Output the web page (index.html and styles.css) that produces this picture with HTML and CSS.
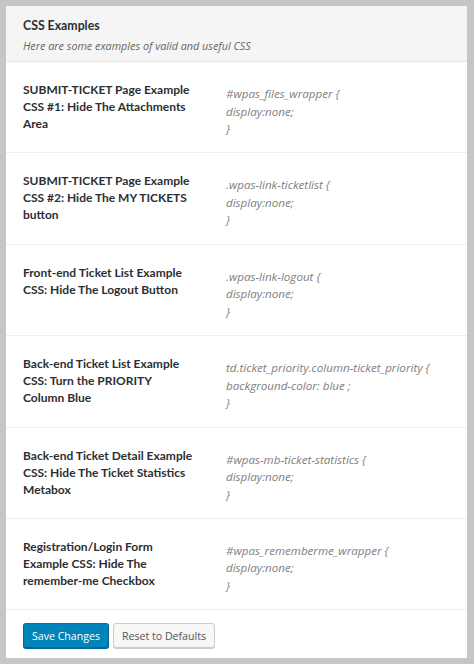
FILE: index.html
```html
<!DOCTYPE html>
<html lang="en">
<head>
    <meta charset="UTF-8">
    <meta name="viewport" content="width=device-width, initial-scale=1.0">
    <title>CSS Examples</title>
    <link rel="stylesheet" href="styles.css">
</head>
<body>

<div class="panel">
    <div class="panel-head">
        <h3>CSS Examples</h3>
        <p>Here are some examples of valid and useful CSS</p>
    </div>

    <div class="example">
        <div class="label">SUBMIT-TICKET Page Example CSS #1: Hide The Attachments Area</div>
        <div class="code">#wpas_files_wrapper {<br>display:none;<br>}</div>
    </div>
    <div class="example">
        <div class="label">SUBMIT-TICKET Page Example CSS #2: Hide The MY TICKETS button</div>
        <div class="code">.wpas-link-ticketlist {<br>display:none;<br>}</div>
    </div>
    <div class="example">
        <div class="label">Front-end Ticket List Example CSS: Hide The Logout Button</div>
        <div class="code">.wpas-link-logout {<br>display:none;<br>}</div>
    </div>
    <div class="example">
        <div class="label">Back-end Ticket List Example CSS: Turn the PRIORITY Column Blue</div>
        <div class="code">td.ticket_priority.column-ticket_priority {<br>background-color: blue ;<br>}</div>
    </div>
    <div class="example">
        <div class="label">Back-end Ticket Detail Example CSS: Hide The Ticket Statistics Metabox</div>
        <div class="code">#wpas-mb-ticket-statistics {<br>display:none;<br>}</div>
    </div>
    <div class="example">
        <div class="label">Registration/Login Form Example CSS: Hide The remember-me Checkbox</div>
        <div class="code">#wpas_rememberme_wrapper {<br>display:none;<br>}</div>
    </div>

    <div class="actions">
        <button class="btn btn-primary">Save Changes</button>
        <button class="btn">Reset to Defaults</button>
    </div>
</div>

</body>
</html>
```

FILE: styles.css
```css
body {
    margin: 0;
    padding: 6px 7px 7px 6px;
    background: #c6c6c6;
    font-family: "Open Sans", "Noto Sans", sans-serif;
    color: #2b2f33;
}

.panel {
    background: #fff;
}

.panel-head {
    background: #f5f5f5;
    border-bottom: 1px solid #e8e8e8;
    padding: 11px 17px 9px;
    height: 35px;
}

.panel-head h3 {
    margin: 0;
    font-family: Lato, "Open Sans", sans-serif;
    font-size: 12.3px;
    font-weight: 700;
    line-height: 17px;
}

.panel-head p {
    margin: 4px 0 0;
    font-size: 10.8px;
    font-style: italic;
    color: #666;
    line-height: 16px;
}

.example {
    display: grid;
    grid-template-columns: 203px 1fr;
    height: 90.4px;
    padding: 0 17px;
    border-bottom: 1px solid #eeeeee;
    align-items: start;
}

.label {
    padding-top: 19px;
    padding-right: 33.5px;
    font-family: Lato, "Open Sans", sans-serif;
    font-size: 12px;
    font-weight: 700;
    line-height: 17px;
}

.code {
    padding-top: 23px;
    font-size: 11.6px;
    font-style: italic;
    color: #808080;
    line-height: 17.5px;
}

.actions {
    display: flex;
    gap: 4px;
    padding: 13px 17px 10px;
}

.btn {
    height: 25px;
    padding: 0 8px;
    font-family: inherit;
    font-size: 10.6px;
    color: #555;
    background: #f7f7f7;
    border: 1px solid #ccc;
    border-radius: 3px;
    box-shadow: 0 1px 0 #ccc;
}

.btn-primary {
    background: #0085ba;
    border-color: #0073aa #006799 #006799;
    color: #fff;
    box-shadow: 0 1px 0 #006799;
}
```
